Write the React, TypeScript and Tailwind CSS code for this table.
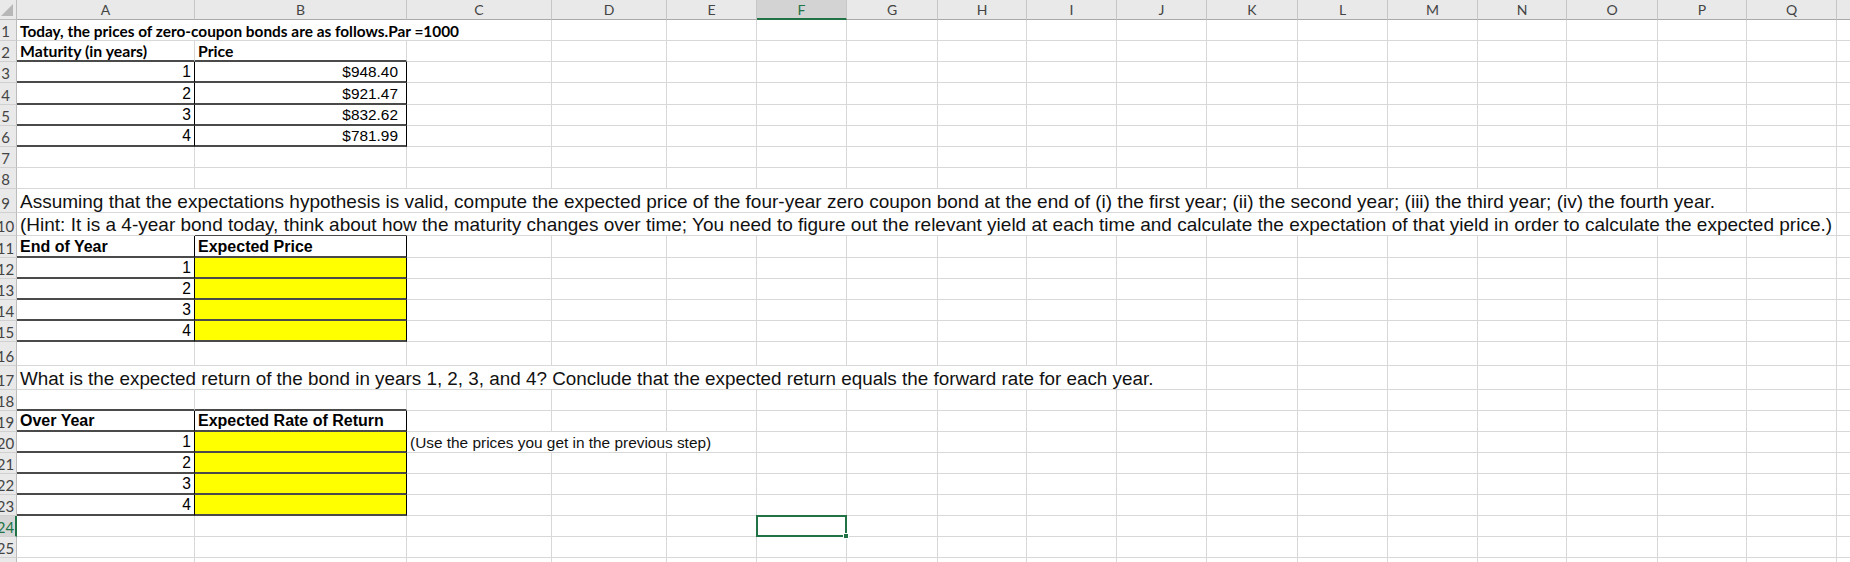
import React from "react";

const CAL = "font-['Lato',sans-serif]";
const ARIAL = "font-['Liberation_Sans',Arial,sans-serif]";

const LETTERS = ["A", "B", "C", "D", "E", "F", "G", "H", "I", "J", "K", "L", "M", "N", "O", "P", "Q", "R"];
const WIDTHS = [
  "w-[178px]", "w-[212px]", "w-[145px]", "w-[115px]", "w-[90px]", "w-[90px]", "w-[91px]", "w-[89px]", "w-[90px]",
  "w-[90px]", "w-[91px]", "w-[90px]", "w-[90px]", "w-[89px]", "w-[91px]", "w-[89px]", "w-[90px]", "w-[90px]",
];

const ROWS: { n: number; h: string }[] = [
  { n: 1, h: "h-[21px]" }, { n: 2, h: "h-[21px]" }, { n: 3, h: "h-[21px]" }, { n: 4, h: "h-[22px]" },
  { n: 5, h: "h-[21px]" }, { n: 6, h: "h-[21px]" }, { n: 7, h: "h-[21px]" }, { n: 8, h: "h-[21px]" },
  { n: 9, h: "h-[24px]" }, { n: 10, h: "h-[23px]" }, { n: 11, h: "h-[22px]" }, { n: 12, h: "h-[21px]" },
  { n: 13, h: "h-[21px]" }, { n: 14, h: "h-[21px]" }, { n: 15, h: "h-[21px]" }, { n: 16, h: "h-[24px]" },
  { n: 17, h: "h-[24px]" }, { n: 18, h: "h-[21px]" }, { n: 19, h: "h-[21px]" }, { n: 20, h: "h-[21px]" },
  { n: 21, h: "h-[21px]" }, { n: 22, h: "h-[21px]" }, { n: 23, h: "h-[21px]" }, { n: 24, h: "h-[21px]" },
  { n: 25, h: "h-[21px]" }, { n: 26, h: "h-[21px]" },
];

const inTable = (r: number) => (r >= 3 && r <= 6) || (r >= 11 && r <= 15) || (r >= 19 && r <= 23);
const darkRight = (r: number, c: number) => c <= 1 && inTable(r);
const darkBottom = (r: number, c: number) =>
  (c <= 1 && (r === 2 || r === 18 || inTable(r))) || (c === 1 && r === 10);
const yellow = (r: number, c: number) => c === 1 && ((r >= 12 && r <= 15) || (r >= 20 && r <= 23));

const prices: Record<number, string> = { 3: "$948.40", 4: "$921.47", 5: "$832.62", 6: "$781.99" };
const years: Record<number, string> = { 3: "1", 4: "2", 5: "3", 6: "4", 12: "1", 13: "2", 14: "3", 15: "4", 20: "1", 21: "2", 22: "3", 23: "4" };

const Spill = ({ children, cls }: { children: React.ReactNode; cls: string }) => (
  <div className={`relative z-[1] h-full flex items-end bg-white whitespace-nowrap pl-[3px] pr-[2px] ${cls}`}>
    {children}
  </div>
);

const BIG = `${ARIAL} text-[19px] leading-[21px] text-[#111]`;
const HEAD = `pl-[3px] ${ARIAL} font-bold text-[16px] leading-[18px] whitespace-nowrap`;

const content = (r: number, c: number) => {
  if (c === 0) {
    if (r === 1)
      return <Spill cls={`${CAL} font-bold text-[15.4px] leading-[18px] text-black`}>Today, the prices of zero-coupon bonds are as follows.Par =1000</Spill>;
    if (r === 2)
      return <div className={`pl-[3px] ${CAL} font-bold text-[15.8px] leading-[18px] whitespace-nowrap`}>Maturity (in years)</div>;
    if (r === 9)
      return (
        <Spill cls={BIG}>
          Assuming that the expectations hypothesis is valid, compute the expected price of the four-year zero coupon bond at the end of (i) the first year; (ii) the second year; (iii) the third year; (iv) the fourth year.
        </Spill>
      );
    if (r === 10)
      return (
        <Spill cls={BIG}>
          (Hint: It is a 4-year bond today, think about how the maturity changes over time; You need to figure out the relevant yield at each time and calculate the expectation of that yield in order to calculate the expected price.)
        </Spill>
      );
    if (r === 11) return <div className={HEAD}>End of Year</div>;
    if (r === 17)
      return (
        <Spill cls={`${ARIAL} text-[18.85px] leading-[21px] text-[#111]`}>
          What is the expected return of the bond in years 1, 2, 3, and 4? Conclude that the expected return equals the forward rate for each year.
        </Spill>
      );
    if (r === 19) return <div className={HEAD}>Over Year</div>;
    if (years[r])
      return <div className={`w-full text-right pr-[3px] ${ARIAL} text-[15.6px] leading-[18px]`}>{years[r]}</div>;
  }
  if (c === 1) {
    if (r === 2)
      return <div className={`pl-[3px] ${CAL} font-bold text-[15.8px] leading-[18px]`}>Price</div>;
    if (prices[r])
      return <div className={`w-full text-right pr-[8px] ${ARIAL} text-[15.4px] leading-[18px]`}>{prices[r]}</div>;
    if (r === 11) return <div className={HEAD}>Expected Price</div>;
    if (r === 19) return <div className={HEAD}>Expected Rate of Return</div>;
  }
  if (c === 2 && r === 20)
    return <Spill cls={`${ARIAL} text-[15.4px] leading-[18px] text-[#111]`}>(Use the prices you get in the previous step)</Spill>;
  return null;
};

const Cell = ({ r, c }: { r: number; c: number }) => {
  const br = darkRight(r, c) ? "border-r-black" : "border-r-[#d8d8d8]";
  const bb = darkBottom(r, c) ? "border-b-2 border-b-[#4a4a4a]" : "border-b border-b-[#d8d8d8]";
  const bg = yellow(r, c) ? "bg-[#ffff00]" : "bg-white";
  const selected = r === 24 && c === 5;
  return (
    <div className={`${WIDTHS[c]} shrink-0 h-full border-r ${br} ${bb} ${bg} flex items-end ${selected ? "relative" : ""}`}>
      {content(r, c)}
      {selected && (
        <div className="absolute -left-[1px] -top-[1px] -right-[1px] -bottom-[1px] border-2 border-[#217346] z-[2]">
          <div className="absolute -right-[4px] -bottom-[4px] w-[6px] h-[6px] bg-[#217346] border border-white" />
        </div>
      )}
    </div>
  );
};

const RowHead = ({ n }: { n: number }) => {
  const sel = n === 24;
  return (
    <div
      className={`w-[17px] shrink-0 h-full overflow-hidden flex items-end border-b border-b-[#d0d0d0] ${
        sel ? "bg-[#d6d6d6] border-r-2 border-r-[#217346] text-[#217346]" : "bg-[#e9e9e9] border-r border-r-[#bcbcbc] text-[#444]"
      }`}
    >
      <div className={`-ml-[6px] w-[23px] shrink-0 text-center ${CAL} text-[15px] leading-[18px]`}>{n}</div>
    </div>
  );
};

export default function App() {
  return (
    <div className="w-[1850px] h-[562px] overflow-hidden bg-white">
      <div className="flex h-[20px]">
        <div className="w-[17px] shrink-0 h-full bg-[#e9e9e9] border-r border-b border-[#bcbcbc] flex items-end justify-end">
          <svg width="14" height="14" viewBox="0 0 14 14" className="mb-[2px] mr-[2px]">
            <polygon points="13,1 13,13 1,13" fill="#b7b7b7" />
          </svg>
        </div>
        {LETTERS.map((l, c) => {
          const sel = c === 5;
          return (
            <div
              key={l}
              className={`${WIDTHS[c]} shrink-0 h-full flex items-center justify-center border-r border-r-[#c6c6c6] ${CAL} text-[14px] ${
                sel ? "bg-[#d3d3d3] text-[#217346] border-b-2 border-b-[#217346]" : "bg-[#e9e9e9] text-[#444] border-b border-b-[#a9a9a9]"
              }`}
            >
              {l}
            </div>
          );
        })}
      </div>
      {ROWS.map((row) => (
        <div key={row.n} className={`flex ${row.h}`}>
          <RowHead n={row.n} />
          {LETTERS.map((l, c) => (
            <Cell key={l} r={row.n} c={c} />
          ))}
        </div>
      ))}
    </div>
  );
}
